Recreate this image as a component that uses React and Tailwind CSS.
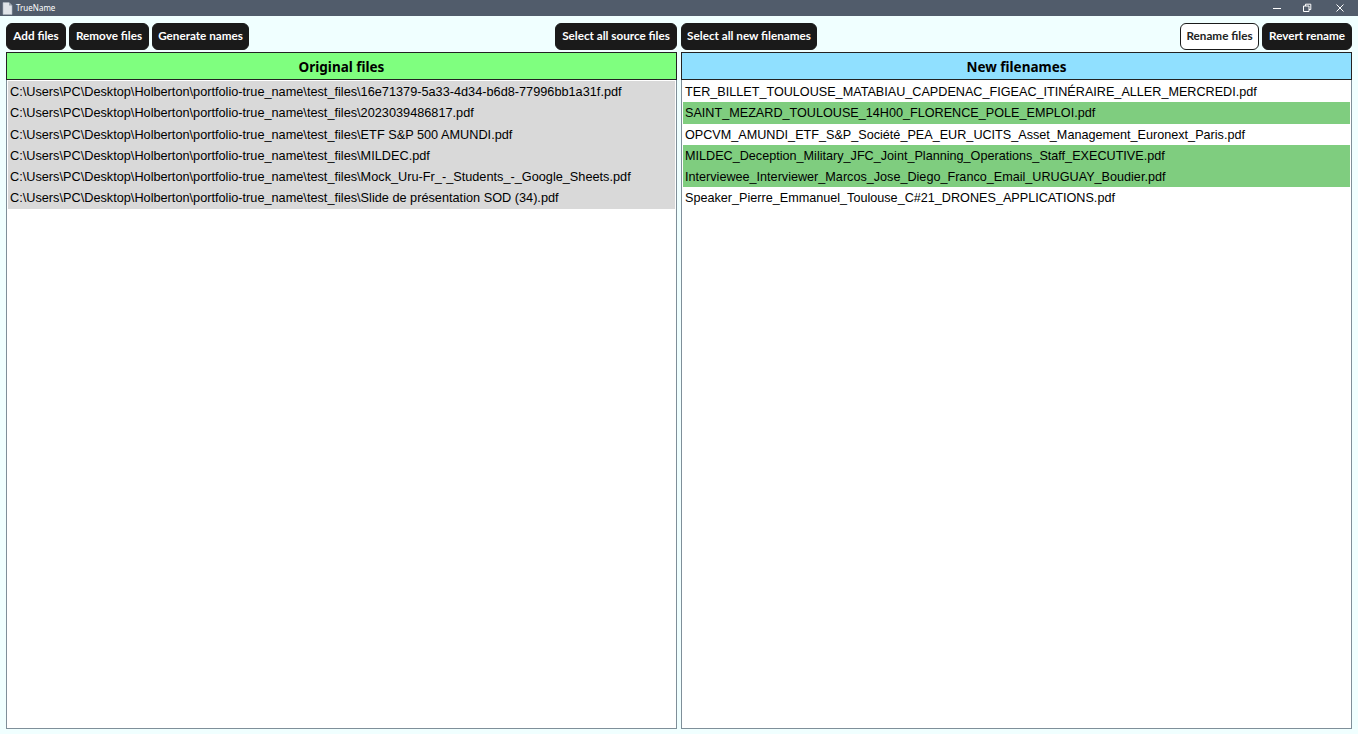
const src = [
  "C:\\Users\\PC\\Desktop\\Holberton\\portfolio-true_name\\test_files\\16e71379-5a33-4d34-b6d8-77996bb1a31f.pdf",
  "C:\\Users\\PC\\Desktop\\Holberton\\portfolio-true_name\\test_files\\2023039486817.pdf",
  "C:\\Users\\PC\\Desktop\\Holberton\\portfolio-true_name\\test_files\\ETF S&P 500 AMUNDI.pdf",
  "C:\\Users\\PC\\Desktop\\Holberton\\portfolio-true_name\\test_files\\MILDEC.pdf",
  "C:\\Users\\PC\\Desktop\\Holberton\\portfolio-true_name\\test_files\\Mock_Uru-Fr_-_Students_-_Google_Sheets.pdf",
  "C:\\Users\\PC\\Desktop\\Holberton\\portfolio-true_name\\test_files\\Slide de présentation SOD (34).pdf",
];
const dst = [
  ["TER_BILLET_TOULOUSE_MATABIAU_CAPDENAC_FIGEAC_ITINÉRAIRE_ALLER_MERCREDI.pdf", false],
  ["SAINT_MEZARD_TOULOUSE_14H00_FLORENCE_POLE_EMPLOI.pdf", true],
  ["OPCVM_AMUNDI_ETF_S&P_Société_PEA_EUR_UCITS_Asset_Management_Euronext_Paris.pdf", false],
  ["MILDEC_Deception_Military_JFC_Joint_Planning_Operations_Staff_EXECUTIVE.pdf", true],
  ["Interviewee_Interviewer_Marcos_Jose_Diego_Franco_Email_URUGUAY_Boudier.pdf", true],
  ["Speaker_Pierre_Emmanuel_Toulouse_C#21_DRONES_APPLICATIONS.pdf", false],
];

function Btn({ children, light, className = "" }) {
  return (
    <button
      className={
        "h-[27px] shrink-0 pb-[1px] rounded-[6px] text-[11.7px] font-bold whitespace-nowrap font-['Lato',sans-serif] leading-none border-[1.5px] " +
        (light ? "bg-white text-[#222] border-[#1a1a1a] " : "bg-[#1a1a1a] text-white border-[#1a1a1a] ") +
        className
      }
    >
      {children}
    </button>
  );
}

function Panel({ title, head, size, children }) {
  return (
    <div className="flex-1 min-w-0 flex flex-col border border-[#7f8f99] bg-white">
      <div className={"h-[28px] -mx-px -mt-px pt-[2px] border border-[#222] flex items-center justify-center text-[13.5px] font-bold text-black font-['Noto_Sans',sans-serif] " + head}>
        {title}
      </div>
      <div className={"flex-1 px-px pt-px font-['Liberation_Sans',sans-serif] text-black " + size}>{children}</div>
    </div>
  );
}

function Row({ children, bg }) {
  return <div className={"h-[21.3px] pl-[2px] whitespace-nowrap " + bg}>{children}</div>;
}

export default function App() {
  return (
    <div className="h-[734px] w-[1358px] flex flex-col bg-[#f0ffff] overflow-hidden">
      <div className="h-[16px] shrink-0 bg-[#515c6b] flex items-center text-white">
        <svg width="11" height="13" viewBox="0 0 11 13" className="ml-[2px] mr-[3px]">
          <path d="M1 0.5h6l3 3v9H1z" fill="#dfe3e8" stroke="#aab2bc" strokeWidth="0.6" />
          <path d="M7 0.5v3h3" fill="#9aa3ad" />
        </svg>
        <span className="text-[8px] font-['Noto_Sans',sans-serif]">TrueName</span>
        <div className="ml-auto flex items-center">
          <svg width="10" height="10" viewBox="0 0 10 10" className="mr-[20px]">
            <path d="M1 5.5h8" stroke="#fff" strokeWidth="1" />
          </svg>
          <svg width="10" height="10" viewBox="0 0 10 10" className="mr-[23px]">
            <path d="M1.5 3h5.5v5.5h-5.5zM3.5 3V1.2h5.3v5.3H7" fill="none" stroke="#fff" strokeWidth="1" />
          </svg>
          <svg width="10" height="10" viewBox="0 0 10 10" className="mr-[13px]">
            <path d="M1.5 1.5l7 7M8.5 1.5l-7 7" stroke="#fff" strokeWidth="1" />
          </svg>
        </div>
      </div>
      <div className="flex-1 flex flex-col px-[6px] pt-[7px] pb-[5px] min-h-0">
        <div className="flex gap-[4px] h-[27px] shrink-0">
          <div className="flex-1 flex items-center gap-[3px]">
            <Btn className="w-[60px]">Add files</Btn>
            <Btn className="w-[80px]">Remove files</Btn>
            <Btn className="w-[97px]">Generate names</Btn>
            <Btn className="ml-auto w-[122px]">Select all source files</Btn>
          </div>
          <div className="flex-1 flex items-center gap-[3px]">
            <Btn className="w-[136px]">Select all new filenames</Btn>
            <Btn light className="ml-auto w-[79px]">Rename files</Btn>
            <Btn className="w-[90px]">Revert rename</Btn>
          </div>
        </div>
        <div className="flex-1 flex gap-[4px] mt-[2px] min-h-0">
          <Panel title="Original files" head="bg-[#7fff7f]" size="text-[12.72px] leading-[22px]">
            {src.map((s) => (
              <Row key={s} bg="bg-[#d9d9d9]">{s}</Row>
            ))}
          </Panel>
          <Panel title="New filenames" head="bg-[#90e0ff]" size="text-[12.64px] leading-[23px]">
            {dst.map(([s, on]) => (
              <Row key={s} bg={on ? "bg-[#7fcd7f]" : ""}>{s}</Row>
            ))}
          </Panel>
        </div>
      </div>
    </div>
  );
}
